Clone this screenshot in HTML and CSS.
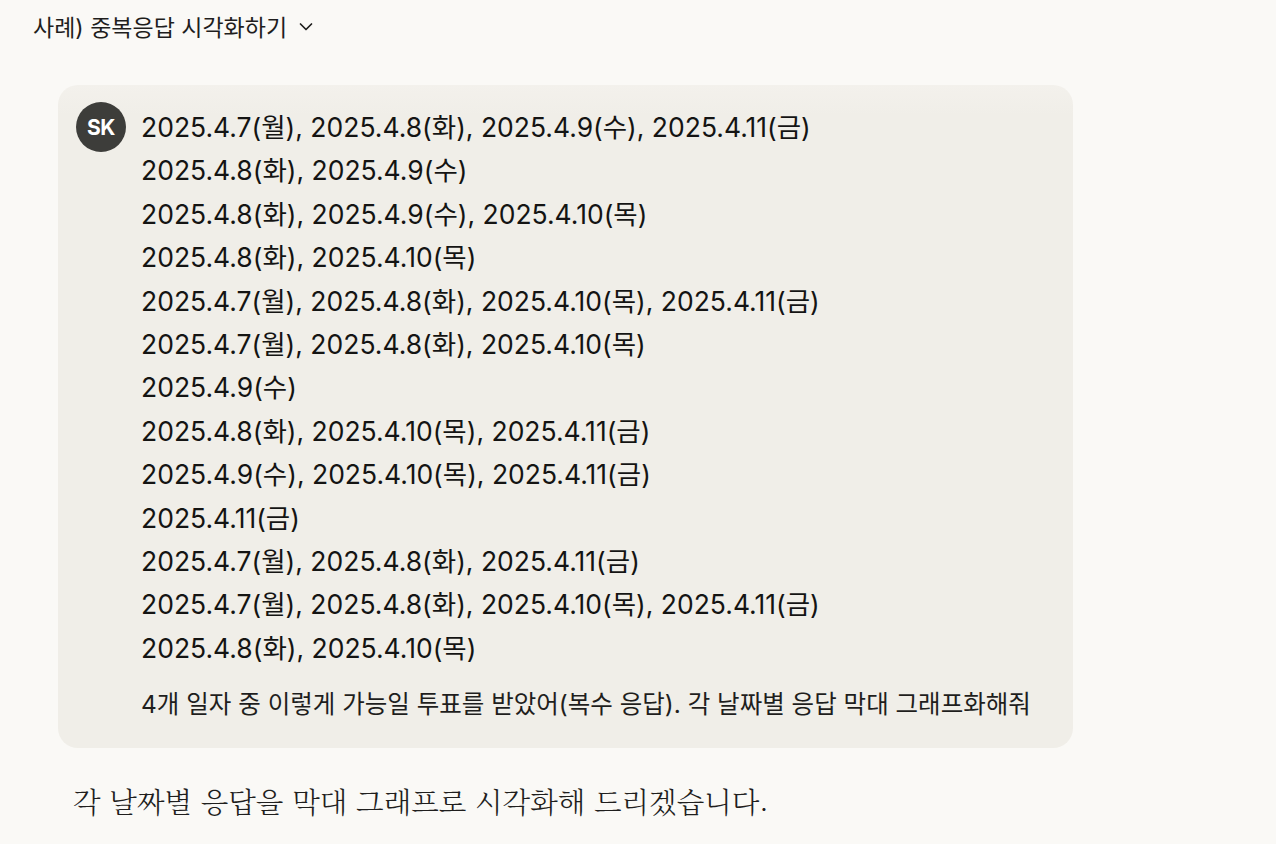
FILE: index.html
```html
<!DOCTYPE html>
<html lang="ko">
<head>
<meta charset="utf-8">
<link rel="stylesheet" href="styles.css">
</head>
<body>
<div class="page">
  <div class="title">
    <span>사례) 중복응답 시각화하기</span>
    <svg class="chev" width="14" height="10" viewBox="0 0 14 10"><path d="M1.5 2 L7 7.5 L12.5 2" fill="none" stroke="#1f1e1d" stroke-width="1.7" stroke-linecap="round" stroke-linejoin="round"/></svg>
  </div>
  <div class="bubble">
    <div class="avatar">SK</div>
    <div class="msg">
      <div class="lines">
        <p>2025.4.7(월), 2025.4.8(화), 2025.4.9(수), 2025.4.11(금)</p>
        <p>2025.4.8(화), 2025.4.9(수)</p>
        <p>2025.4.8(화), 2025.4.9(수), 2025.4.10(목)</p>
        <p>2025.4.8(화), 2025.4.10(목)</p>
        <p>2025.4.7(월), 2025.4.8(화), 2025.4.10(목), 2025.4.11(금)</p>
        <p>2025.4.7(월), 2025.4.8(화), 2025.4.10(목)</p>
        <p>2025.4.9(수)</p>
        <p>2025.4.8(화), 2025.4.10(목), 2025.4.11(금)</p>
        <p>2025.4.9(수), 2025.4.10(목), 2025.4.11(금)</p>
        <p>2025.4.11(금)</p>
        <p>2025.4.7(월), 2025.4.8(화), 2025.4.11(금)</p>
        <p>2025.4.7(월), 2025.4.8(화), 2025.4.10(목), 2025.4.11(금)</p>
        <p>2025.4.8(화), 2025.4.10(목)</p>
      </div>
      <p class="ask">4개 일자 중 이렇게 가능일 투표를 받았어(복수 응답). 각 날짜별 응답 막대 그래프화해줘</p>
    </div>
  </div>
  <p class="reply">각 날짜별 응답을 막대 그래프로 시각화해 드리겠습니다.</p>
</div>
</body>
</html>
```
FILE: styles.css
```css
html, body {
  margin: 0;
  padding: 0;
  background: #faf9f6;
}
body {
  font-family: Inter, "Noto Sans CJK KR", sans-serif;
  color: #1f1e1d;
}
.page {
  padding: 9px 0 0 33px;
}
.title {
  display: flex;
  align-items: center;
  gap: 12px;
  font-size: 23px;
  height: 34px;
}
.chev {
  margin-top: 2px;
}
.bubble {
  margin: 42px 0 0 25px;
  width: 1015px;
  box-sizing: border-box;
  display: flex;
  gap: 15px;
  padding: 17px 18px 28px 18px;
  border-radius: 20px;
  background: linear-gradient(to bottom, #f3f1ec 0px, #f0eee8 30px, #f0eee8 100%);
}
.avatar {
  flex: none;
  width: 50px;
  height: 50px;
  border-radius: 50%;
  background: #3d3d3a;
  color: #fff;
  font-weight: 700;
  font-size: 21px;
  display: flex;
  align-items: center;
  justify-content: center;
  letter-spacing: -0.5px;
}
.msg {
  font-size: 24.5px;
  padding-top: 4px;
}
.lines p {
  margin: 0;
  font-size: 26.5px;
  line-height: 43.4px;
  color: #141413;
}
.ask {
  margin: 18px 0 0 0;
  line-height: 32px;
}
.reply {
  margin: 32px 0 0 40px;
  font-family: "Noto Serif CJK KR", "Liberation Serif", serif;
  font-weight: 300;
  font-size: 28.5px;
}
```
